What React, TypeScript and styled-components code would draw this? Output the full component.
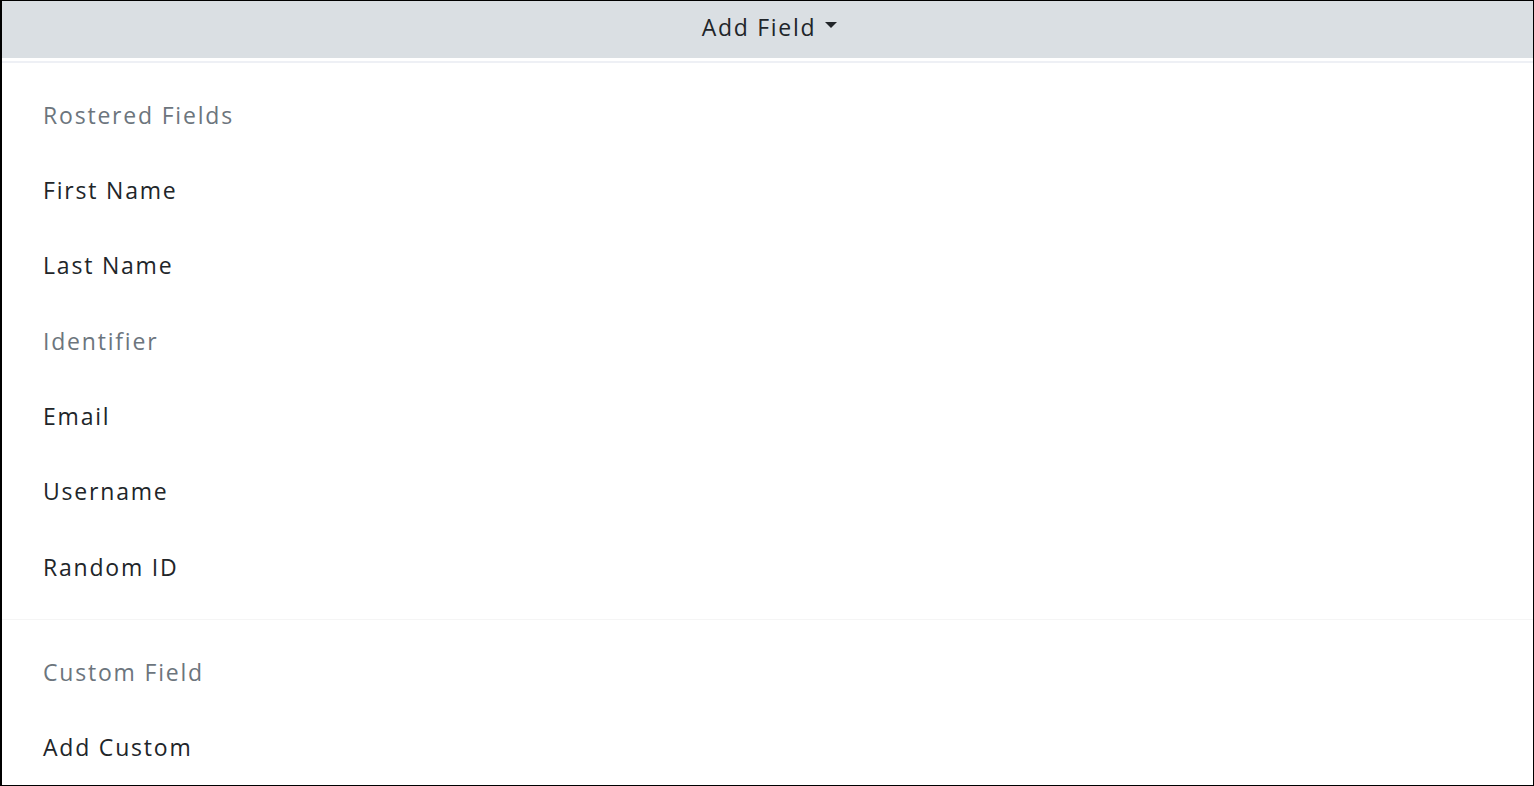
import React from "react";
import styled, { createGlobalStyle } from "styled-components";

const GlobalStyle = createGlobalStyle`
    html, body {
        margin: 0;
        padding: 0;
        background: #ffffff;
    }
    body {
        font-family: "Open Sans", "Liberation Sans", sans-serif;
    }
`;

type entry = { label: string; kind: "header" | "item" | "divider" };

const entries: entry[] = [
    { label: "Rostered Fields", kind: "header" },
    { label: "First Name", kind: "item" },
    { label: "Last Name", kind: "item" },
    { label: "Identifier", kind: "header" },
    { label: "Email", kind: "item" },
    { label: "Username", kind: "item" },
    { label: "Random ID", kind: "item" },
    { label: "", kind: "divider" },
    { label: "Custom Field", kind: "header" },
    { label: "Add Custom", kind: "item" },
];

const App = () => {
    return (
        <>
            <GlobalStyle />
            <Frame>
                <Toggle type="button">
                    <ToggleLabel>Add Field</ToggleLabel>
                    <Caret />
                </Toggle>
                <Menu>
                    {entries.map((e, i) =>
                        e.kind === "divider" ? (
                            <Divider key={i} />
                        ) : (
                            <MenuRow key={i} muted={e.kind === "header"}>
                                {e.label}
                            </MenuRow>
                        )
                    )}
                </Menu>
            </Frame>
        </>
    );
};

export default App;

const Frame = styled.div`
    box-sizing: border-box;
    width: 1534px;
    height: 786px;
    border: 1px solid #000000;
    border-left-width: 2px;
    display: flex;
    flex-direction: column;
    overflow: hidden;
`;

const Toggle = styled.button`
    flex: none;
    height: 57px;
    width: 100%;
    margin: 0;
    border: none;
    background: #dadfe3;
    display: flex;
    align-items: center;
    justify-content: center;
    gap: 9px;
    padding: 0 0 5px 4px;
    font-family: inherit;
    cursor: pointer;
`;

const ToggleLabel = styled.span`
    font-size: 23px;
    letter-spacing: 1.7px;
    color: #212529;
`;

const Caret = styled.span`
    width: 0;
    height: 0;
    border-left: 6px solid transparent;
    border-right: 6px solid transparent;
    border-top: 6px solid #212529;
    margin-top: -4px;
`;

const Menu = styled.div`
    flex: 1;
    margin-top: 3px;
    border-top: 2px solid #eef0f5;
    padding-top: 14px;
    display: flex;
    flex-direction: column;
`;

const MenuRow = styled.div<{ muted: boolean }>`
    height: 75.33px;
    display: flex;
    align-items: center;
    padding-left: 41px;
    font-size: 23px;
    letter-spacing: 1.8px;
    color: ${(props) => (props.muted ? "#6c757d" : "#212529")};
`;

const Divider = styled.div`
    height: 1px;
    background: #f5f5f5;
    margin: 15px 0 14px 0;
`;
